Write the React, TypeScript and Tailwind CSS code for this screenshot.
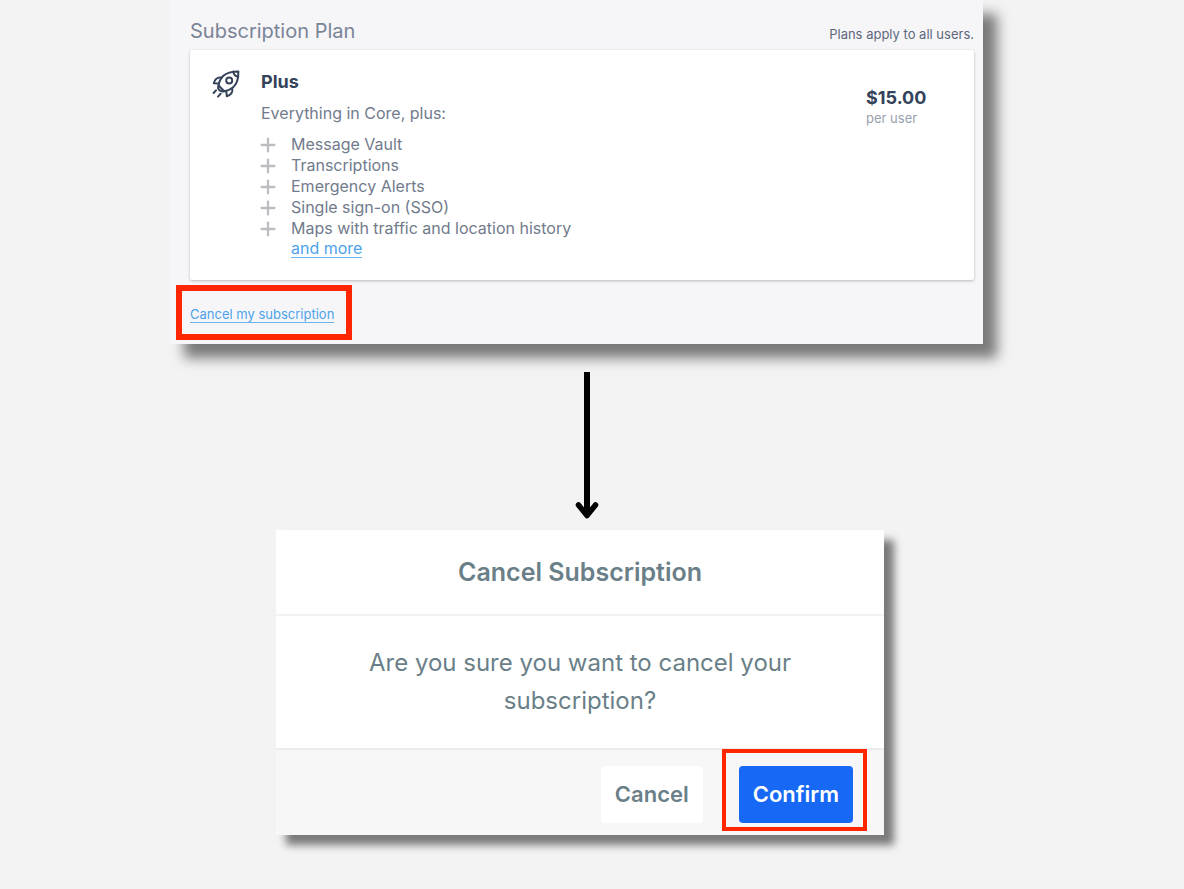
import { Plus } from "lucide-react";
import { clsx } from "clsx";

const features = [
  "Message Vault",
  "Transcriptions",
  "Emergency Alerts",
  "Single sign-on (SSO)",
  "Maps with traffic and location history",
];

function RocketIcon({ className }: { className?: string }) {
  return (
    <svg
      viewBox="0 0 28 28"
      fill="none"
      stroke="currentColor"
      strokeWidth="2"
      strokeLinecap="round"
      strokeLinejoin="round"
      className={className}
      aria-hidden="true"
    >
      {/* hull and nose */}
      <path d="M26.400 1.400C20 1.400 14.800 2.400 11.400 5.800 8.600 8.600 7 12 6.600 15.500L12.200 21.200C15.800 20.800 19.200 19.200 22 16.400 25.400 13 26.400 7.800 26.400 1.400Z" />
      <path d="M21.400 1.800c.3 2.600 1.800 4.200 4.500 4.800" />
      <circle cx="17.200" cy="10.400" r="3" />
      {/* fins */}
      <path d="M9.800 7.600C6 6.800 3 8.600 1.800 13.200l5 .4" />
      <path d="M20.200 18c.8 3.800-1 6.800-5.400 8.200l-.6-5.400" />
      {/* engine and exhaust */}
      <path d="M6.600 15.500c-.9 2-.6 3.500.6 4.600s2.800 1.600 5 1.100" />
      <path d="M4 20.400l-2.400 2.600M8.600 23.800l-2.600 2.800" />
    </svg>
  );
}

function DownArrow({ className }: { className?: string }) {
  return (
    <svg
      viewBox="0 0 24 148"
      fill="none"
      stroke="#000"
      className={className}
      aria-hidden="true"
    >
      <path d="M12 0v142" strokeWidth="6" />
      <path
        d="M3.500 133l8.500 10.500 8.500-10.500"
        strokeWidth="5.500"
        strokeLinecap="round"
        strokeLinejoin="round"
      />
    </svg>
  );
}

function SubscriptionPlan() {
  return (
    <section className="mr-[31px] w-full max-w-[813px] bg-[#f6f6f9] pt-4 pr-[9px] pb-1 pl-5 shadow-[14px_14px_12px_rgba(0,0,0,0.5)]">
      <header className="flex h-[34px] items-start justify-between">
        <h1 className="text-xl leading-[30px] text-[#7b8496]">
          Subscription Plan
        </h1>
        <p className="text-[13px] leading-9 text-[#5d687a]">
          Plans apply to all users.
        </p>
      </header>

      <div className="flex items-start rounded-xs bg-white pt-5 pb-[22px] pl-[22px] shadow-[0_1px_3px_rgba(0,0,0,0.25)]">
        <RocketIcon className="size-7 shrink-0 text-[#34435a]" />
        <div className="ml-[21px] flex-1 text-base leading-[21px] text-[#717b8c]">
          <h2 className="text-lg leading-6 font-bold text-[#34435a]">Plus</h2>
          <p className="mt-[9px]">Everything in Core, plus:</p>
          <ul className="mt-[10px]">
            {features.map((feature) => (
              <li key={feature} className="flex items-center gap-3">
                <Plus
                  className="-my-1 -ml-1 size-[22px] text-[#bcbdc1]"
                  strokeWidth={2.5}
                />
                {feature}
              </li>
            ))}
          </ul>
          <a
            href="#features"
            className="ml-[30px] block w-fit border-b border-[#6db3ee] leading-[18px] text-[#4da3ea]"
          >
            and more
          </a>
        </div>
        <div className="mt-4 w-[108px] shrink-0">
          <p className="text-lg leading-6 font-bold text-[#34435a]">$15.00</p>
          <p className="text-[13px] leading-4 text-[#99a0ae]">per user</p>
        </div>
      </div>

      <div className="mt-[5px] -ml-[14px] flex h-[55px] w-fit items-center border-6 border-[#ff2600] pt-1 pr-3 pl-2">
        <a
          href="#cancel"
          className="border-b border-[#6db3ee] text-[13px] leading-4 text-[#4da3ea]"
        >
          Cancel my subscription
        </a>
      </div>
    </section>
  );
}

function DialogButton({
  label,
  primary = false,
}: {
  label: string;
  primary?: boolean;
}) {
  return (
    <button
      type="button"
      className={clsx(
        "h-[57px] rounded px-[14px] text-[22px] font-semibold",
        primary ? "bg-[#1769f5] text-white" : "bg-white text-[#6a7f88]",
      )}
    >
      {label}
    </button>
  );
}

function CancelDialog() {
  return (
    <section
      role="dialog"
      aria-labelledby="dialog-title"
      className="mt-[10px] mr-6 w-full max-w-[608px] bg-white text-[#6a7f88] shadow-[10px_10px_8px_rgba(0,0,0,0.5)]"
    >
      <h2
        id="dialog-title"
        className="border-b-2 border-[#f1f2f3] py-6 text-center text-[25px] leading-9 font-semibold"
      >
        Cancel Subscription
      </h2>
      <p className="border-b-2 border-[#ececed] px-20 pt-7 pb-7 text-center text-2xl leading-[38px]">
        Are you sure you want to cancel your subscription?
      </p>
      <footer className="flex justify-end gap-9 bg-[#f7f7f7] pt-4 pr-[31px] pb-3">
        <DialogButton label="Cancel" />
        <div className="relative">
          <DialogButton label="Confirm" primary />
          <span className="pointer-events-none absolute -top-[17px] -right-[14px] -bottom-[8px] -left-[17px] border-4 border-[#ff2600]" />
        </div>
      </footer>
    </section>
  );
}

export default function App() {
  return (
    <main className="flex min-h-screen flex-col items-center bg-[#f3f3f3] pb-[53px] font-['Inter',sans-serif]">
      <SubscriptionPlan />
      <DownArrow className="mt-7 mr-[10px] h-[148px] w-6" />
      <CancelDialog />
    </main>
  );
}
